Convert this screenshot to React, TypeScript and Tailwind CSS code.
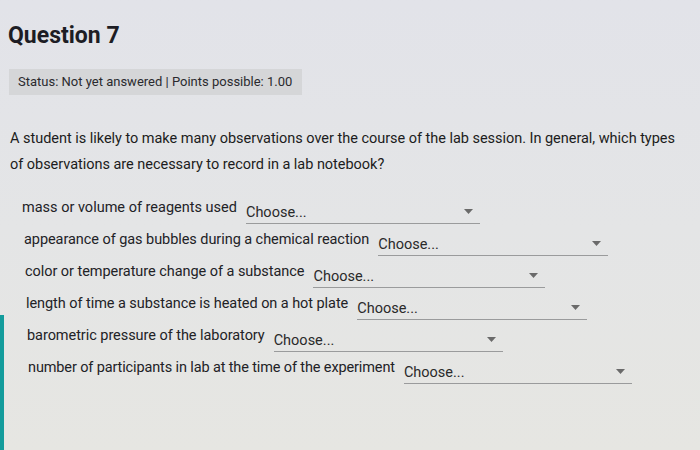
import React from "react";

const rows = [
  { label: "mass or volume of reagents used", pl: "pl-[18px]", tr: "tracking-[0px]", w: "w-[234px]" },
  { label: "appearance of gas bubbles during a chemical reaction", pl: "pl-[20px]", tr: "tracking-[-0.06px]", w: "w-[230px]" },
  { label: "color or temperature change of a substance", pl: "pl-[21px]", tr: "tracking-[-0.05px]", w: "w-[232px]" },
  { label: "length of time a substance is heated on a hot plate", pl: "pl-[22px]", tr: "tracking-[-0.06px]", w: "w-[230px]" },
  { label: "barometric pressure of the laboratory", pl: "pl-[23px]", tr: "tracking-[-0.05px]", w: "w-[229px]" },
  { label: "number of participants in lab at the time of the experiment", pl: "pl-[24px]", tr: "tracking-[-0.13px]", w: "w-[228px]" },
];

function Select({ w }: { w: string }) {
  return (
    <div className={`ml-[9px] mt-[11px] flex h-[20px] items-center justify-between border-b border-[#9a9b9c] pr-[7px] ${w}`}>
      <span className="text-[14.5px] text-[#2a2a2a]">Choose...</span>
      <svg width="9" height="6" viewBox="0 0 9 6" className="mb-[2px]">
        <path d="M0 0 L9 0 L4.5 5 Z" fill="#6a6a6a" />
      </svg>
    </div>
  );
}

export default function App() {
  return (
    <div
      className="flex h-[450px] w-[700px] overflow-hidden bg-gradient-to-b from-[#e2e3e9] via-[#e4e5e6] to-[#e6e6e2] text-[#1f1f22]"
      style={{ fontFamily: "Roboto, 'Liberation Sans', sans-serif" }}
    >
      <div className="flex w-[4px] shrink-0 flex-col">
        <div className="h-[315px]" />
        <div className="flex-1 bg-[#139c9c]" />
      </div>
      <div className="flex flex-1 flex-col">
        <h1 className="ml-[4px] mt-[21px] text-[23px] font-bold leading-[30px] text-[#1d1d24]">Question 7</h1>
        <div className="ml-[5px] mt-[18px] flex h-[26px] w-[293px] items-center bg-[#d5d6d8] pl-[9px] text-[13px] text-[#2a2a2e]">
          Status: Not yet answered | Points possible: 1.00
        </div>
        <p className="ml-[6px] mt-[31px] w-[674px] text-[14.5px] leading-[26px] tracking-[-0.03px] text-[#1c1c20]">
          A student is likely to make many observations over the course of the lab session. In general, which types of observations are necessary to record in a lab notebook?
        </p>
        <div className="mt-[19px] flex flex-col gap-[10px]">
          {rows.map((r) => (
            <div key={r.label} className={`flex h-[22px] items-center ${r.pl}`}>
              <span className={`whitespace-nowrap text-[14.5px] text-[#222226] ${r.tr}`}>{r.label}</span>
              <Select w={r.w} />
            </div>
          ))}
        </div>
      </div>
    </div>
  );
}
